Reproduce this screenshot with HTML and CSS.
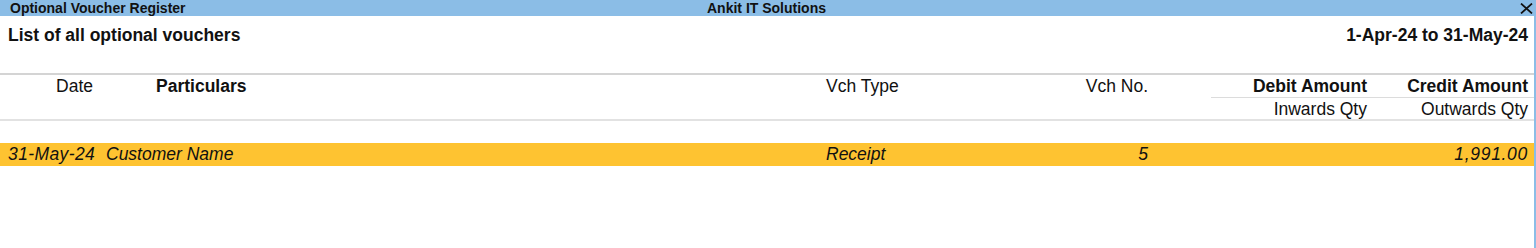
FILE: index.html
```html
<!DOCTYPE html>
<html>
<head>
<meta charset="utf-8">
<link rel="stylesheet" href="styles.css">
</head>
<body>
<div class="titlebar">
  <span class="title-left">Optional Voucher Register</span>
  <span class="title-center">Ankit IT Solutions</span>
  <span class="close">
    <svg width="13" height="11" viewBox="0 0 13 11"><path d="M1 0.5 L12 10.5 M12 0.5 L1 10.5" stroke="#111" stroke-width="1.7" fill="none"/></svg>
  </span>
</div>
<div class="content">
  <div class="heading">
    <span>List of all optional vouchers</span>
    <span>1-Apr-24 to 31-May-24</span>
  </div>
  <div class="colhead">
    <div class="h-date">Date</div>
    <div class="h-part">Particulars</div>
    <div class="h-type">Vch Type</div>
    <div class="h-no">Vch No.</div>
    <div class="h-amounts">
      <div class="amt-top">
        <div class="h-debit">Debit Amount</div>
        <div class="h-credit">Credit Amount</div>
      </div>
      <div class="amt-bottom">
        <div class="h-debit-sub">Inwards Qty</div>
        <div class="h-credit-sub">Outwards Qty</div>
      </div>
    </div>
  </div>
  <div class="row selected">
    <div class="c-date">31-May-24</div>
    <div class="c-part">Customer Name</div>
    <div class="c-type">Receipt</div>
    <div class="c-no">5</div>
    <div class="c-debit"></div>
    <div class="c-credit">1,991.00</div>
  </div>
</div>
</body>
</html>
```
FILE: styles.css
```css
html, body {
  margin: 0;
  padding: 0;
  background: #ffffff;
}
body {
  width: 1536px;
  height: 248px;
  overflow: hidden;
  font-family: "Liberation Sans", Arial, sans-serif;
  color: #111;
}
.titlebar {
  height: 16px;
  background: #8bbde6;
  position: relative;
  display: flex;
  align-items: center;
  font-size: 14px;
  font-weight: bold;
  line-height: 16px;
}
.title-left {
  padding-left: 10px;
}
.title-center {
  position: absolute;
  left: 707px;
  top: 0;
}
.close {
  position: absolute;
  right: 3px;
  top: 3px;
  line-height: 0;
}
.content {
  height: 232px;
  border-right: 2px solid #8bbde6;
  box-sizing: border-box;
  width: 1536px;
}
.heading {
  display: flex;
  justify-content: space-between;
  font-size: 17.5px;
  font-weight: bold;
  line-height: 18px;
  padding: 10px 6px 0 8px;
  height: 59px;
  box-sizing: border-box;
  border-bottom: 2px solid #d4d4d4;
}
.colhead {
  display: grid;
  grid-template-columns: 100px 720px 180px 152px 382px;
  font-size: 17.5px;
  line-height: 18px;
  height: 46px;
  box-sizing: border-box;
  border-bottom: 2px solid #e2e2e2;
  padding-top: 2px;
}
.h-date, .h-part, .h-type, .h-no {
  padding-top: 0;
}
.h-date {
  text-align: right;
  padding-right: 7px;
}
.h-part {
  font-weight: bold;
  padding-left: 56px;
}
.h-type {
  padding-left: 6px;
}
.h-no {
  text-align: right;
  padding-right: 4px;
}
.h-amounts {
  display: flex;
  flex-direction: column;
}
.amt-top, .amt-bottom {
  display: grid;
  margin-left: 59px;
  grid-template-columns: 161px 162px;
}
.amt-top {
  font-weight: bold;
  padding-top: 0;
  height: 21px;
  box-sizing: border-box;
  border-bottom: 1px solid #dcdcdc;
}
.amt-bottom {
  padding-top: 2px;
}
.h-debit, .h-debit-sub {
  text-align: right;
  padding-right: 5px;
}
.h-credit, .h-credit-sub {
  text-align: right;
  padding-right: 6px;
}
.row {
  display: grid;
  grid-template-columns: 100px 720px 180px 152px 220px 162px;
  font-size: 17.5px;
  line-height: 23px;
  height: 23px;
  font-style: italic;
  margin-top: 22px;
}
.row.selected {
  background: #fec331;
}
.c-date {
  padding-left: 8px;
  letter-spacing: 0.4px;
}
.c-part {
  padding-left: 6px;
}
.c-type {
  padding-left: 6px;
}
.c-no {
  text-align: right;
  padding-right: 4px;
}
.c-credit {
  text-align: right;
  padding-right: 6px;
  letter-spacing: 0.7px;
}
```
